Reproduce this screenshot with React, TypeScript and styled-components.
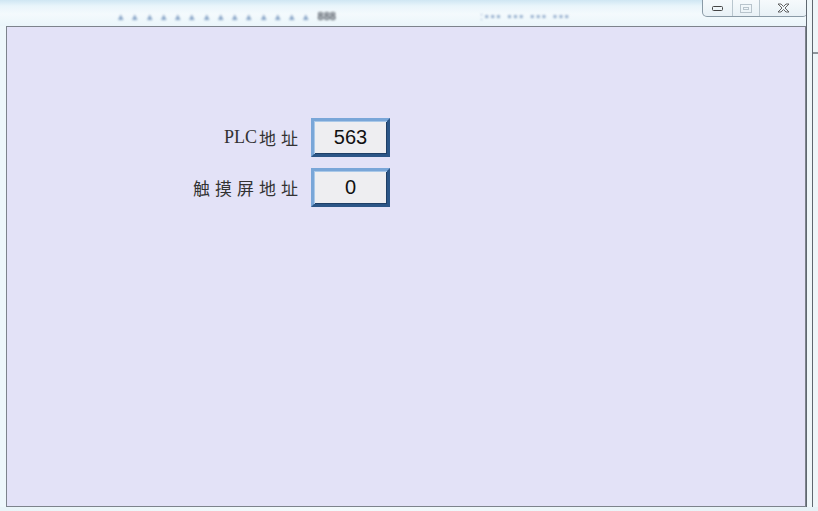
import styled, { createGlobalStyle } from 'styled-components';

const GlobalStyle = createGlobalStyle`
  html, body {
    margin: 0;
    padding: 0;
    background: #eef7fb;
  }
`;

const fields = [
  { latin: 'PLC', cjk: '地址', value: '563' },
  { latin: '', cjk: '触摸屏地址', value: '0' },
];

const App = () => {
  return (
    <Screen>
      <GlobalStyle />
      <TitleStrip>
        <GhostText $left={118} $width={262} $spacing={2.6}>
          ▴ ▴ ▴ ▴ ▴ ▴ ▴ ▴ ▴ ▴ ▴ ▴ ▴ ▴ <b>888</b>
        </GhostText>
        <GhostText $left={100} $width={110} $spacing={2}>
          :▪▪▪ ▪▪▪ ▪▪▪ ▪▪▪
        </GhostText>
        <Controls>
          <CtrlButton $w={29}>
            <svg width="11" height="5" viewBox="0 0 11 5">
              <rect x="0.5" y="0.5" width="10" height="4" rx="1" fill="none" stroke="#444" />
            </svg>
          </CtrlButton>
          <CtrlButton $w={26}>
            <svg width="12" height="9" viewBox="0 0 12 9">
              <rect x="0.5" y="0.5" width="11" height="8" fill="none" stroke="#b8c4cc" />
              <rect x="3.5" y="3.5" width="5" height="2" fill="none" stroke="#b8c4cc" />
            </svg>
          </CtrlButton>
          <CtrlButton $w={47}>
            <svg width="13" height="10" viewBox="0 0 13 10">
              <path
                d="M1 1 L4 1 L6.5 3.5 L9 1 L12 1 L8 5 L12 9 L9 9 L6.5 6.5 L4 9 L1 9 L5 5 Z"
                fill="none"
                stroke="#555"
                strokeWidth="0.9"
              />
            </svg>
          </CtrlButton>
        </Controls>
      </TitleStrip>
      <Body>
        <Panel>
          <Form>
            {fields.map(f => (
              <Row key={f.cjk}>
                <Label>
                  {f.latin && <Latin>{f.latin}</Latin>}
                  <Cjk>{f.cjk}</Cjk>
                </Label>
                <ValueBox>{f.value}</ValueBox>
              </Row>
            ))}
          </Form>
        </Panel>
        <RightEdge>
          <Tick />
        </RightEdge>
      </Body>
      <BottomStrip />
    </Screen>
  );
};

const Screen = styled.div`
  width: 818px;
  height: 511px;
  display: flex;
  flex-direction: column;
  overflow: hidden;
  background: #eef7fb;
`;

const TitleStrip = styled.div`
  height: 26px;
  display: flex;
  align-items: flex-start;
  background: linear-gradient(to bottom, #cfe6f3 0px, #e9f5fb 6px, #f4fafd 14px, #eaf5fa 26px);
`;

const GhostText = styled.div<{ $left: number; $width: number; $spacing: number }>`
  width: ${p => p.$width}px;
  margin-left: ${p => p.$left}px;
  margin-top: 10px;
  font-family: 'Liberation Sans', sans-serif;
  font-size: 11px;
  letter-spacing: ${p => p.$spacing}px;
  color: #86a3c6;
  white-space: nowrap;
  overflow: hidden;
  filter: blur(1.1px);

  b {
    color: #555c66;
    letter-spacing: 0;
  }
`;

const Controls = styled.div`
  margin-left: auto;
  margin-right: 10px;
  height: 16px;
  display: flex;
  border: 1px solid #8a9aa6;
  border-top: none;
  border-radius: 0 0 5px 5px;
  background: linear-gradient(to bottom, #f6fafc, #e8f1f6);
  overflow: hidden;
`;

const CtrlButton = styled.div<{ $w: number }>`
  width: ${p => p.$w}px;
  display: flex;
  align-items: center;
  justify-content: center;
  border-left: 1px solid #b9c6ce;

  &:first-child {
    border-left: none;
  }
`;

const Body = styled.div`
  flex: 1;
  display: flex;
  padding-left: 6px;
`;

const Panel = styled.div`
  width: 800px;
  box-sizing: border-box;
  border: 1px solid #7d838c;
  background: #e3e2f7;
`;

const Form = styled.div`
  display: flex;
  flex-direction: column;
  align-items: flex-end;
  gap: 11px;
  width: 383px;
  padding-top: 91px;
`;

const Row = styled.div`
  display: flex;
  align-items: center;
  gap: 13px;
`;

const Label = styled.span`
  display: flex;
  align-items: center;
  gap: 2px;
  color: #333;
`;

const Latin = styled.span`
  font-family: 'Liberation Serif', serif;
  font-size: 18px;
`;

const Cjk = styled.span`
  font-family: 'Noto Sans CJK SC', sans-serif;
  font-size: 17px;
  letter-spacing: 5px;
  margin-right: -5px;
`;

const ValueBox = styled.div`
  width: 79px;
  height: 39px;
  box-sizing: border-box;
  display: flex;
  align-items: center;
  justify-content: center;
  border-style: solid;
  border-width: 3px;
  border-color: #79a6d8 #2c5687 #2c5687 #79a6d8;
  box-shadow: inset 1px 1px 0 #a9c8e8, inset -1px -1px 0 #1f3f66;
  background: #eeeef1;
  font-family: 'Liberation Sans', Arial, sans-serif;
  font-size: 20px;
  color: #111;
`;

const RightEdge = styled.div`
  flex: 1;
  position: relative;
  margin-top: -26px;
  border-left: 6px solid transparent;
  background: linear-gradient(to right, #5f6870 0px, #5f6870 1px, #eef6f9 1px);
`;

const Tick = styled.div`
  position: absolute;
  left: 1px;
  top: 52px;
  width: 6px;
  height: 2px;
  background: #8e969c;
`;

const BottomStrip = styled.div`
  height: 4px;
  background: linear-gradient(to right, #e9f4f8, #f3fafc 40%, #e6f1f6);
`;

export default App;
